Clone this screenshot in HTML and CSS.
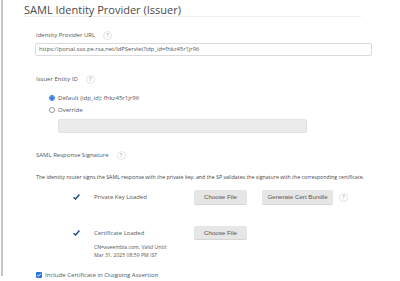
FILE: index.html
```html
<!DOCTYPE html>
<html>
<head>
<meta charset="utf-8">
<link rel="stylesheet" href="styles.css">
</head>
<body>
<div class="frame">
  <div class="panel">
    <h1 class="title">SAML Identity Provider (Issuer)</h1>
    <div class="field url-field">
      <div class="label">Identity Provider URL <span class="help">?</span></div>
      <div class="input">https://portal.sso.pe.rsa.net/IdPServlet?idp_id=fhkz45r1jr96</div>
    </div>
    <div class="field issuer-field">
      <div class="label">Issuer Entity ID <span class="help">?</span></div>
      <div class="radios">
        <div class="radio-row"><span class="radio on"></span>Default (idp_id): fhkz45r1jr96</div>
        <div class="radio-row"><span class="radio"></span>Override</div>
        <div class="input disabled"></div>
      </div>
    </div>
    <div class="field sig-field">
      <div class="label">SAML Response Signature <span class="help">?</span></div>
      <div class="desc">The identity router signs the SAML response with the private key, and the SP validates the signature with the corresponding certificate.</div>
      <div class="key-row">
        <span class="check"><svg width="7" height="6" viewBox="0 0 7 6"><path d="M0.6 3.2 L2.6 5 L6.4 0.6" fill="none" stroke="#1f4e8c" stroke-width="1.5"/></svg></span>
        <span class="key-name">Private Key Loaded</span>
        <span class="btn">Choose File</span>
        <span class="btn gen">Generate Cert Bundle</span>
        <span class="help">?</span>
      </div>
      <div class="key-row cert">
        <span class="check"><svg width="7" height="6" viewBox="0 0 7 6"><path d="M0.6 3.2 L2.6 5 L6.4 0.6" fill="none" stroke="#1f4e8c" stroke-width="1.5"/></svg></span>
        <div class="cert-info">
          <span class="key-name">Certificate Loaded</span>
          <span class="small first">CN=aseembla.com, Valid Until:</span>
          <span class="small">Mar 31, 2025 08:59 PM IST</span>
        </div>
        <span class="btn">Choose File</span>
      </div>
      <div class="include"><span class="cbox"><svg width="6" height="6" viewBox="0 0 6 6"><path d="M1.2 3 L2.5 4.3 L4.9 1.6" fill="none" stroke="#fff" stroke-width="1"/></svg></span>Include Certificate in Outgoing Assertion</div>
    </div>
  </div>
</div>
</body>
</html>
```

FILE: styles.css
```css
* { box-sizing: border-box; }
html, body { margin: 0; padding: 0; background: #fff; }
body {
  font-family: "Open Sans", "Noto Sans", sans-serif;
  color: #555;
  width: 400px;
  height: 281px;
  overflow: hidden;
}
.frame {
  margin-left: 1px;
  border-left: 2px solid #c4c4c4;
  height: 276px;
}
.panel {
  padding-left: 21px;
}
.title {
  margin: 0;
  padding-top: 4px;
  font-size: 11px;
  font-weight: 400;
  line-height: 12px;
  color: #4a4a4a;
  width: 337px;
  border-bottom: 1px solid #eeeeee;
}
.field { padding-left: 12px; }
.url-field { padding-top: 13.5px; }
.label {
  font-size: 6px;
  line-height: 9px;
  height: 9px;
  color: #555;
  display: flex;
  align-items: center;
  gap: 8px;
}
.help {
  display: inline-flex;
  align-items: center;
  justify-content: center;
  flex: none;
  width: 9px;
  height: 9px;
  border-radius: 50%;
  border: 1px solid #e4e4e4;
  font-size: 5px;
  line-height: 7px;
  color: #888;
}
.input {
  margin-top: 3px;
  margin-left: -1px;
  width: 337px;
  height: 13px;
  border: 1px solid #dadada;
  border-radius: 2px;
  font-size: 5.8px;
  line-height: 11px;
  padding-left: 3px;
  color: #555;
  white-space: nowrap;
}
.issuer-field { padding-top: 19.5px; }
.radios { padding-left: 13px; padding-top: 7.5px; }
.radio-row {
  display: flex;
  align-items: center;
  height: 12px;
  font-size: 6.05px;
  color: #555;
}
.radio {
  width: 6px;
  height: 6px;
  border-radius: 50%;
  border: 1px solid #999;
  margin-right: 3px;
  background: #fff;
}
.radio.on {
  border-color: #2f7de1;
  background: radial-gradient(circle, #2f7de1 55%, #fff 62%);
}
.radios .input.disabled {
  margin-left: 9px;
  margin-top: 3px;
  width: 249px;
  height: 14px;
  background: #ebebeb;
  border-color: #e2e2e2;
}
.sig-field { padding-top: 18.5px; }
.desc {
  margin-top: 12.5px;
  font-size: 5.25px;
  line-height: 8px;
  color: #444;
  white-space: nowrap;
}
.key-row {
  display: flex;
  align-items: flex-start;
  margin-top: 9px;
}
.check {
  width: 8px;
  margin-left: 37px;
  margin-right: 13px;
  padding-top: 4px;
  display: flex;
}
.key-name {
  font-size: 5.95px;
  line-height: 14px;
  color: #555;
  width: 100px;
  white-space: nowrap;
}
.btn {
  display: inline-flex;
  align-items: center;
  justify-content: center;
  flex: none;
  height: 14px;
  width: 53px;
  background: #e6e6e6;
  border-radius: 2px;
  box-shadow: 0 1px 0 #d6d6d6;
  font-family: "Liberation Sans", Arial, sans-serif;
  font-size: 6.2px;
  color: #555;
  white-space: nowrap;
}
.btn.gen { width: 71px; margin-left: 15px; margin-right: 6px; }
.key-row .help { margin-top: 3px; }
.key-row.cert { margin-top: 22px; }
.cert-info { display: flex; flex-direction: column; width: 100px; }
.small { font-size: 5.15px; line-height: 8.5px; color: #555; white-space: nowrap; }
.small.first { margin-top: 3px; }
.cert .btn { height: 13px; margin-top: 0; }
.include {
  display: flex;
  align-items: center;
  margin-top: 10.5px;
  height: 9px;
  font-size: 6.05px;
  color: #555;
}
.cbox {
  width: 6px;
  height: 6px;
  background: #2a73d9;
  border-radius: 1px;
  margin-right: 3px;
  display: inline-flex;
  flex: none;
}
```
